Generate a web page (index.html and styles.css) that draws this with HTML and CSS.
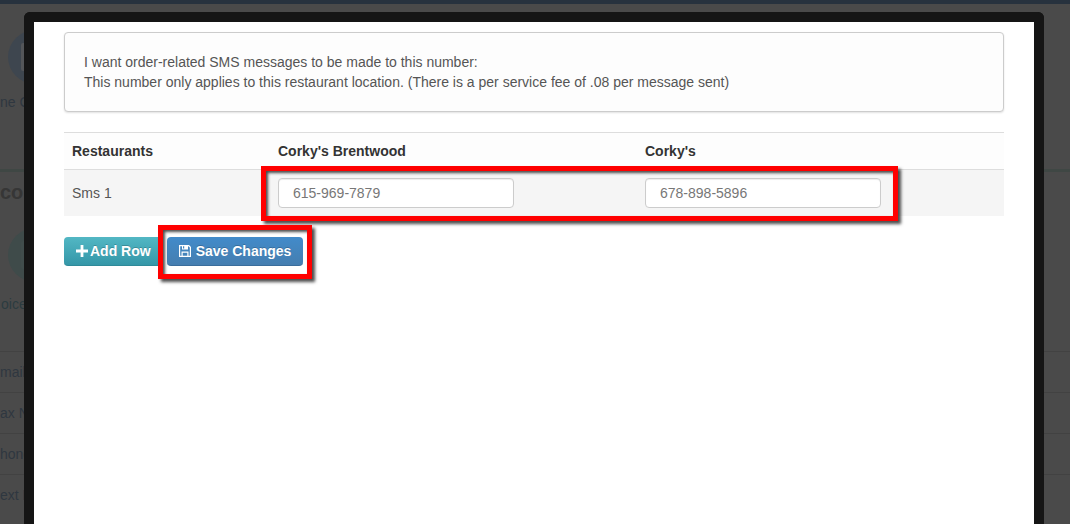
FILE: index.html
```html
<!DOCTYPE html>
<html lang="en">
<head>
<meta charset="utf-8">
<title>SMS numbers</title>
<link rel="stylesheet" href="styles.css">
</head>
<body>
<div class="page">
  <div class="topbar"></div>
  <section class="bg-section first">
    <div class="bg-circle slate"><span class="bg-glyph"></span></div>
    <div class="bg-label">ne C</div>
  </section>
  <section class="bg-section second">
    <h2 class="bg-heading">co</h2>
    <div class="bg-circle teal"><span class="bg-glyph dim"></span></div>
    <div class="bg-label voice">oice</div>
  </section>
  <ul class="bg-list">
    <li>mail</li>
    <li>ax N</li>
    <li>hone</li>
    <li>ext N</li>
  </ul>
</div>

<div class="modal">
  <div class="notice">
    <p>I want order-related SMS messages to be made to this number:</p>
    <p>This number only applies to this restaurant location. (There is a per service fee of .08 per message sent)</p>
  </div>
  <table class="sms-table">
    <thead>
      <tr>
        <th class="col-name">Restaurants</th>
        <th class="col-loc">Corky's Brentwood</th>
        <th class="col-loc">Corky's</th>
      </tr>
    </thead>
    <tbody>
      <tr>
        <td>Sms 1</td>
        <td><input class="phone" type="text" value="615-969-7879"></td>
        <td><input class="phone" type="text" value="678-898-5896"></td>
      </tr>
    </tbody>
  </table>
  <div class="actions">
    <button class="btn btn-add" type="button"><svg class="ico-plus" viewBox="0 0 12 12" aria-hidden="true"><path d="M4.6 0h2.8v4.6H12v2.8H7.4V12H4.6V7.4H0V4.6h4.6z"/></svg>Add Row</button>
    <button class="btn btn-save" type="button"><svg class="ico-save" viewBox="0 0 14 14" aria-hidden="true"><path fill-rule="evenodd" d="M1 1h10l2 2v10H1zM2.2 2.2v9.6h1.3V7.5h7v4.3h1.3V3.5l-1.5-1.3H10v3.3H4V2.2zM5 2.2v2.3h1.2V2.2zM4.7 8.7v3.1h4.6V8.7z"/></svg>Save Changes</button>
  </div>
</div>

<div class="mark mark-inputs"></div>
<div class="mark mark-save"></div>
</body>
</html>
```

FILE: styles.css
```css
* { box-sizing: border-box; }

html, body {
  margin: 0;
  height: 100%;
  overflow: hidden;
}

body {
  position: relative;
  background: #4a4a4a;
  font-family: "Liberation Sans", Arial, sans-serif;
  font-size: 14px;
  color: #333;
}

/* dimmed page behind the dialog */
.page {
  height: 524px;
  overflow: hidden;
}

.topbar {
  height: 4px;
  background: #27323e;
}

.bg-section {
  padding-left: 8px;
}

.bg-section.first {
  padding-top: 26px;
  height: 168px;
  border-bottom: 3px solid #3f4744;
}

.bg-section.second {
  padding-top: 8px;
  height: 179px;
}

.bg-circle {
  width: 54px;
  height: 54px;
  border-radius: 50%;
  display: flex;
  align-items: center;
  padding-left: 13px;
}

.bg-circle.slate { background: #3e464f; }
.bg-circle.teal { background: #3f4b4a; }

.bg-glyph {
  width: 12px;
  height: 28px;
  background: #545659;
  border-radius: 2px;
}

.bg-glyph.dim { background: #414d4c; }

.bg-label {
  margin: 8px 0 0 -8px;
  line-height: 20px;
  color: #2f3740;
}

.bg-label.voice {
  margin: 12px 0 0 -7px;
  color: #2c3c40;
}

.bg-heading {
  margin: 0 0 24px -8px;
  font-size: 20px;
  line-height: 24px;
  font-weight: 700;
  color: #363636;
}

.bg-list {
  list-style: none;
  margin: 0;
  padding: 0;
}

.bg-list li {
  height: 41px;
  border-top: 1px solid #424242;
  line-height: 40px;
  color: #2f3740;
}

/* dialog */
.modal {
  position: absolute;
  left: 24px;
  top: 12px;
  width: 1020px;
  height: 512px;
  padding: 10px 30px 0;
  background: #fff;
  border: 10px solid #151515;
  border-bottom: 0;
  border-radius: 6px 6px 0 0;
}

.notice {
  height: 80px;
  padding: 19px;
  background: #fdfdfd;
  border: 1px solid #ccc;
  border-radius: 4px;
  box-shadow: 0 1px 2px rgba(0, 0, 0, 0.12);
  color: #555;
  line-height: 20px;
}

.notice p { margin: 0; }

.sms-table {
  width: 940px;
  margin-top: 20px;
  border-collapse: collapse;
  table-layout: fixed;
}

.sms-table th {
  height: 37px;
  padding: 0 8px;
  text-align: left;
  font-weight: 700;
  color: #333;
  background: #fdfdfd;
  border-top: 1px solid #ddd;
  border-bottom: 1px solid #ddd;
}

.col-name { width: 206px; }
.col-loc { width: 367px; }

.sms-table td {
  height: 46px;
  padding: 8px;
  background: #f5f5f5;
  color: #555;
}

.phone {
  display: block;
  width: 236px;
  height: 30px;
  padding: 0 14px;
  background: #fff;
  border: 1px solid #ccc;
  border-radius: 4px;
  box-shadow: inset 0 1px 1px rgba(0, 0, 0, 0.075);
  font: 14px "Liberation Sans", Arial, sans-serif;
  color: #777;
}

.actions {
  display: flex;
  gap: 4px;
  margin-top: 21px;
}

.btn {
  display: flex;
  align-items: center;
  height: 29px;
  padding: 0 12px;
  border: 0;
  border-radius: 4px;
  font: 700 14px "Liberation Sans", Arial, sans-serif;
  color: #fff;
  text-shadow: 0 -1px 0 rgba(0, 0, 0, 0.2);
}

.btn-add {
  background: linear-gradient(#52b7c4, #3597a8);
  border-bottom: 1px solid #2f8a99;
}

.btn-save {
  padding: 0 12px 0 11px;
  background: linear-gradient(#428bca, #457eb0);
  border-bottom: 1px solid #3a6d9c;
}

.ico-plus {
  width: 12px;
  height: 12px;
  margin-right: 2px;
  fill: #fff;
}

.ico-save {
  width: 14px;
  height: 14px;
  margin-right: 4px;
  fill: #fff;
}

/* red annotation boxes drawn on top of the screenshot */
.mark {
  position: absolute;
  border: 5px solid #f00;
  box-shadow: 3px 3px 3px rgba(0, 0, 0, 0.7), inset 2px 2px 3px rgba(0, 0, 0, 0.7);
}

.mark-inputs {
  left: 261px;
  top: 166px;
  width: 637px;
  height: 55px;
}

.mark-save {
  left: 158px;
  top: 225px;
  width: 154px;
  height: 54px;
}
```
